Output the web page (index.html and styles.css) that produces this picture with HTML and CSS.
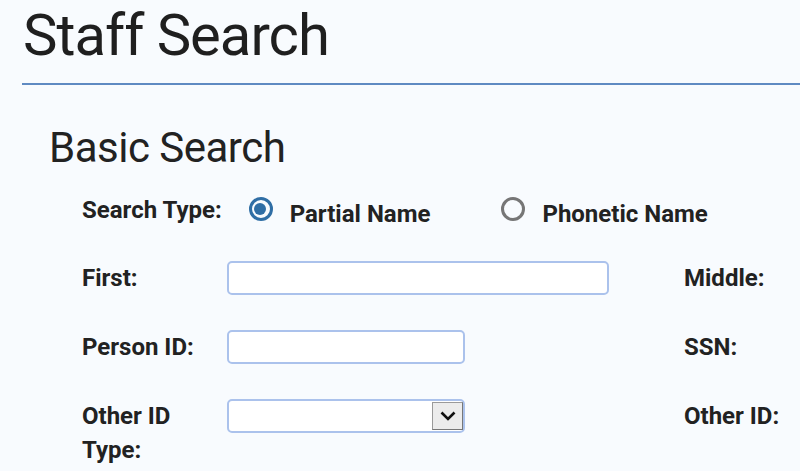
FILE: index.html
```html
<!doctype html>
<html>
<head>
    <meta charset="utf-8">
    <title>Staff Search</title>
    <link rel="stylesheet" href="styles.css">
</head>

<body>
<div class="page">
    <h1 class="page_title">Staff Search</h1>
    <div class="page_rule"></div>

    <div class="basic">
        <h2 class="basic_title">Basic Search</h2>

        <div class="search_type">
            <span class="lbl">Search Type:</span>
            <label class="radio">
                <input type="radio" name="stype" checked>
                <span class="dot on"></span>
                Partial Name
            </label>
            <label class="radio second">
                <input type="radio" name="stype">
                <span class="dot"></span>
                Phonetic Name
            </label>
        </div>

        <div class="fields">
            <span class="lbl">First:</span>
            <div><input type="text" class="box wide"></div>
            <span class="lbl">Middle:</span>

            <span class="lbl">Person ID:</span>
            <div><input type="text" class="box"></div>
            <span class="lbl">SSN:</span>

            <div class="lbl two">
                <span>Other ID</span>
                <span>Type:</span>
            </div>
            <div class="sel">
                <select class="box">
                    <option></option>
                </select>
                <!--下拉按钮-->
                <span class="sel_btn">
                    <svg width="18" height="12" viewBox="0 0 18 12"><path d="M2.5 2.5 L9 9 L15.5 2.5" fill="none" stroke="#111" stroke-width="2.6"/></svg>
                </span>
            </div>
            <span class="lbl">Other ID:</span>
        </div>
    </div>
</div>
</body>

</html>
```

FILE: styles.css
```css
body,
h1,
h2 {
    margin: 0;
    padding: 0;
}

body {
    background-color: #f8fbfe;
    font-family: Roboto, "Liberation Sans", sans-serif;
    color: #222;
    overflow: hidden;
}

.page {
    padding-left: 22px;
}

.page_title {
    font-size: 58px;
    font-weight: 400;
    line-height: 70px;
    letter-spacing: -1px;
    color: #1f1f1f;
    padding-left: 1px;
}

.page_rule {
    height: 2px;
    background-color: #5f8ac2;
    margin-top: 13px;
}

.basic {
    padding-left: 27px;
}

.basic_title {
    font-size: 42px;
    font-weight: 400;
    line-height: 50px;
    letter-spacing: -0.5px;
    color: #222;
    margin-top: 38px;
}

.lbl {
    font-size: 24px;
    font-weight: 700;
    color: #222;
    line-height: 34px;
    white-space: nowrap;
}

.search_type {
    display: flex;
    align-items: flex-start;
    padding-left: 33px;
    margin-top: 20px;
    height: 34px;
}

.radio {
    display: flex;
    align-items: flex-start;
    font-size: 24px;
    font-weight: 700;
    line-height: 34px;
    color: #222;
    margin-top: 4px;
    margin-left: 27px;
}

.radio.second {
    margin-left: 71px;
}

.radio input {
    display: none;
}

.dot {
    width: 24px;
    height: 24px;
    box-sizing: border-box;
    border: 3px solid #767676;
    border-radius: 50%;
    margin-right: 17px;
    position: relative;
}

.dot.on {
    border-color: #2f6ea5;
    border-width: 3.5px;
}

.dot.on::after {
    content: "";
    position: absolute;
    left: 2.5px;
    top: 2.5px;
    width: 12px;
    height: 12px;
    border-radius: 50%;
    background-color: #2f6ea5;
}

.fields {
    display: grid;
    grid-template-columns: 145px 457px auto;
    grid-template-rows: 34px 34px auto;
    row-gap: 35px;
    padding-left: 33px;
    margin-top: 34px;
}

.fields .lbl {
    align-self: start;
}

.lbl.two span {
    display: block;
}

.box {
    display: block;
    box-sizing: border-box;
    width: 238px;
    height: 34px;
    border: 2px solid #abc2ec;
    border-radius: 5px;
    background-color: #fff;
    margin: 0;
    padding: 0 6px;
    font-family: inherit;
    font-size: 16px;
    outline: none;
}

.box.wide {
    width: 382px;
}

.sel {
    position: relative;
    width: 238px;
    align-self: start;
}

.sel select {
    appearance: none;
    -webkit-appearance: none;
}

.sel_btn {
    position: absolute;
    right: 2px;
    top: 3px;
    width: 31px;
    height: 28px;
    box-sizing: border-box;
    border: 1px solid #9a9a9a;
    border-right-color: #777;
    border-bottom-color: #777;
    background-color: #ececec;
    display: flex;
    align-items: center;
    justify-content: center;
}
```
